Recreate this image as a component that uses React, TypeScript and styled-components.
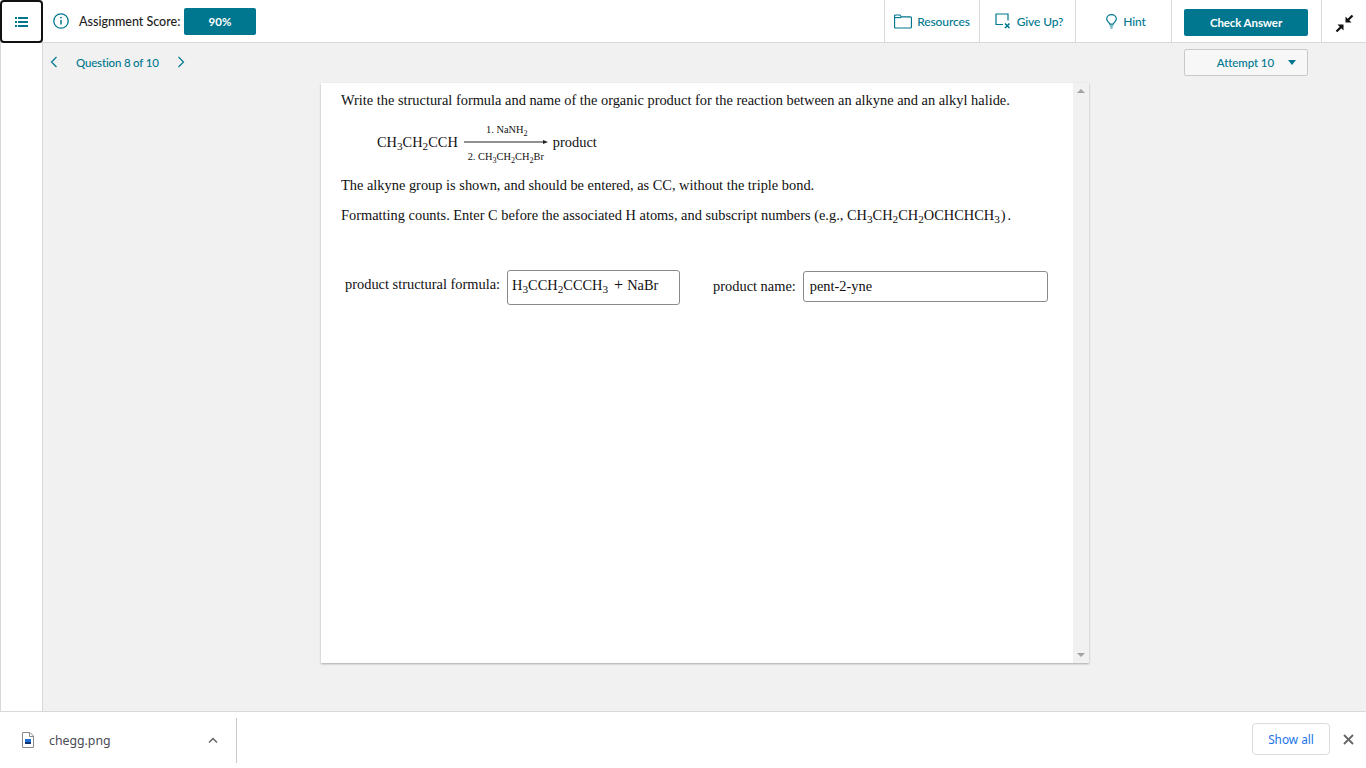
import React from "react";
import styled, { createGlobalStyle } from "styled-components";

const TEAL = "#00778f";

const GlobalStyle = createGlobalStyle`
  html, body {
    margin: 0;
    padding: 0;
    height: 100%;
    overflow: hidden;
    background: #fff;
  }
  #root { height: 100%; }
  * { box-sizing: border-box; }
`;

const Page = styled.div`
  width: 1366px;
  height: 768px;
  display: flex;
  flex-direction: column;
  font-family: Lato, "Open Sans", sans-serif;
`;

const Header = styled.header`
  height: 43px;
  flex: none;
  display: flex;
  align-items: stretch;
  border-bottom: 1px solid #d9d9d9;
  background: #fff;
`;

const MenuButton = styled.button`
  width: 43px;
  height: 43px;
  flex: none;
  background: #fff;
  border: 2px solid #111;
  border-radius: 4px;
  padding: 0;
  display: flex;
  align-items: center;
  justify-content: center;
`;

const ScoreGroup = styled.div`
  flex: 1;
  display: flex;
  align-items: center;
  padding-left: 10px;
`;

const ScoreLabel = styled.span`
  margin-left: 10px;
  font-size: 12.5px;
  font-weight: 500;
  color: #222;
  width: 105px;
  white-space: nowrap;
`;

const ScoreBadge = styled.div`
  width: 72px;
  height: 27px;
  border-radius: 2px;
  background: ${TEAL};
  color: #fff;
  font-size: 11.5px;
  font-weight: 700;
  display: flex;
  align-items: center;
  justify-content: center;
`;

const ToolItem = styled.div<{ $w: number; $gap: number; $pad: number }>`
  width: ${(p) => p.$w}px;
  flex: none;
  border-left: 1px solid #d9d9d9;
  display: flex;
  align-items: center;
  justify-content: center;
  padding-left: ${(p) => p.$pad}px;
  gap: ${(p) => p.$gap}px;
  color: ${TEAL};
  font-size: 12px;
  font-weight: 500;
  letter-spacing: -0.1px;
  white-space: nowrap;
`;

const CheckCell = styled.div`
  width: 150px;
  flex: none;
  border-left: 1px solid #d9d9d9;
  display: flex;
  align-items: center;
  padding-left: 12px;
`;

const CheckButton = styled.button`
  width: 124px;
  height: 27px;
  margin-top: 2px;
  border: 0;
  border-radius: 2px;
  background: ${TEAL};
  color: #fff;
  font-family: inherit;
  font-size: 11.5px;
  font-weight: 700;
  letter-spacing: -0.1px;
  padding: 0;
`;

const CollapseCell = styled.div`
  width: 45px;
  flex: none;
  display: flex;
  align-items: center;
  justify-content: center;
  border-left: 1px solid #d9d9d9;
  padding-top: 4px;
`;

const Body = styled.div`
  flex: 1;
  display: flex;
  min-height: 0;
`;

const Rail = styled.aside`
  width: 43px;
  flex: none;
  background: #fff;
  border-left: 1px solid #d9d9d9;
  border-right: 1px solid #d9d9d9;
`;

const Main = styled.main`
  flex: 1;
  background: #f1f1f1;
  display: flex;
  flex-direction: column;
`;

const SubBar = styled.div`
  height: 40px;
  flex: none;
  display: flex;
  align-items: center;
  padding: 0 58px 2px 7px;
`;

const NavText = styled.span`
  color: ${TEAL};
  font-size: 11.5px;
  font-weight: 500;
  letter-spacing: -0.18px;
  margin: 0 18px 0 18px;
`;

const AttemptSelect = styled.div`
  margin-left: auto;
  width: 124px;
  height: 27px;
  background: #f7f7f7;
  border: 1px solid #c9c9c9;
  border-radius: 2px;
  display: flex;
  align-items: center;
  justify-content: flex-end;
  gap: 14px;
  padding-right: 11px;
  color: ${TEAL};
  font-size: 11.5px;
  font-weight: 500;
  letter-spacing: -0.1px;
`;

const Caret = styled.span`
  width: 0;
  height: 0;
  border-left: 4px solid transparent;
  border-right: 4px solid transparent;
  border-top: 5px solid ${TEAL};
`;

const Card = styled.section`
  width: 768px;
  height: 580px;
  margin-left: 278px;
  flex: none;
  display: flex;
  background: #fff;
  box-shadow: 0 1px 2px rgba(0, 0, 0, 0.3);
`;

const Question = styled.div`
  flex: 1;
  padding: 9px 0 0 20px;
  font-family: "Liberation Serif", "Times New Roman", serif;
  font-size: 14.4px;
  line-height: 17px;
  color: #111;
`;

const Scrollbar = styled.div`
  width: 16px;
  flex: none;
  background: #f1f1f1;
  display: flex;
  flex-direction: column;
  justify-content: space-between;
  align-items: center;
  padding: 6px 0;
`;

const ScrollArrow = styled.span<{ $up?: boolean }>`
  width: 0;
  height: 0;
  border-left: 4px solid transparent;
  border-right: 4px solid transparent;
  ${(p) =>
    p.$up ? "border-bottom: 4px solid #a3a3a3;" : "border-top: 4px solid #a3a3a3;"}
`;

const Paragraph = styled.p<{ $top: number }>`
  margin: ${(p) => p.$top}px 0 0;
  white-space: nowrap;
`;

const Reaction = styled.div`
  margin: 12px 0 0 36px;
  height: 42px;
  display: flex;
  align-items: center;
  white-space: nowrap;
`;

const Arrow = styled.div`
  width: 84px;
  margin: 0 5px 0 6px;
  position: relative;
  height: 42px;
  display: flex;
  flex-direction: column;
  align-items: center;
  justify-content: space-between;
  font-size: 10.4px;
  line-height: 12px;
`;

const ArrowTop = styled.span`
  padding-top: 3px;
  padding-left: 2px;
`;

const ArrowLine = styled.svg`
  position: absolute;
  left: 0;
  top: 18px;
`;

const FormRow = styled.div`
  margin: 46px 0 0 4px;
  display: flex;
  align-items: center;
  white-space: nowrap;
`;

const FormLabel = styled.span<{ $left?: number; $shift: number }>`
  margin-left: ${(p) => p.$left ?? 0}px;
  margin-right: 7px;
  position: relative;
  top: ${(p) => p.$shift}px;
`;

const AnswerBox = styled.div<{ $w: number; $h: number; $pad: number; $shift?: number }>`
  width: ${(p) => p.$w}px;
  height: ${(p) => p.$h}px;
  position: relative;
  top: ${(p) => p.$shift ?? 0}px;
  border: 1px solid #8a8a8a;
  border-radius: 3px;
  padding: 0 6px 0 ${(p) => p.$pad}px;
  display: flex;
  align-items: center;
`;

const Formula = styled.span`
  margin-bottom: 6px;
`;

const Sub = styled.sub`
  font-size: 78%;
  line-height: 0;
  vertical-align: -3px;
`;

const Plus = styled.span`
  margin: 0 4px 0 6px;
  font-size: 16px;
`;

const CloseParen = styled.span`
  margin-left: 1px;
  letter-spacing: 2px;
`;

const DownloadBar = styled.footer`
  height: 57px;
  flex: none;
  background: #fff;
  border-top: 1px solid #d9d9d9;
  display: flex;
  align-items: center;
`;

const FileChip = styled.div`
  width: 237px;
  height: 45px;
  flex: none;
  border-right: 1px solid #c8c8c8;
  display: flex;
  align-items: center;
  padding-left: 22px;
  font-family: "Noto Sans", "Open Sans", sans-serif;
  font-size: 12.3px;
  color: #4a4a55;
`;

const FileName = styled.span`
  margin-left: 15px;
  flex: 1;
`;

const ChipCaret = styled.svg`
  margin-right: 18px;
`;

const ShowAll = styled.button`
  margin-left: auto;
  margin-top: -2px;
  width: 78px;
  height: 32px;
  background: #fff;
  border: 1px solid #dadce0;
  border-radius: 4px;
  color: #1a73e8;
  font-family: "Noto Sans", "Open Sans", sans-serif;
  font-size: 11.8px;
  padding: 0;
`;

const CloseBar = styled.svg`
  margin: -2px 12px 0 13px;
`;

const ListIcon = () => (
  <svg width="14" height="12" viewBox="0 0 14 12" fill={TEAL}>
    <rect x="0" y="1" width="2" height="2" />
    <rect x="3" y="1" width="10" height="2" />
    <rect x="0" y="5" width="2" height="2" />
    <rect x="3" y="5" width="10" height="2" />
    <rect x="0" y="9" width="2" height="2" />
    <rect x="3" y="9" width="10" height="2" />
  </svg>
);

const InfoIcon = () => (
  <svg width="16" height="16" viewBox="0 0 16 16" fill="none" stroke={TEAL}>
    <circle cx="8" cy="8" r="7.2" strokeWidth="1.3" />
    <path d="M8 7v4.6" strokeWidth="1.5" />
    <circle cx="8" cy="4.6" r="0.9" fill={TEAL} stroke="none" />
  </svg>
);

const FolderIcon = () => (
  <svg width="18" height="15" viewBox="0 0 19 15" fill="none" stroke={TEAL} strokeWidth="1.2">
    <path d="M.6 13.4V1.6q0-1 1-1h4.6l1.6 2h9.6q1 0 1 1v9.8q0 1-1 1H1.6q-1 0-1-1z" />
    <path d="M.6 3.4h7" />
  </svg>
);

const GiveUpIcon = () => (
  <svg width="16" height="16" viewBox="0 0 16 16" fill="none" stroke={TEAL}>
    <path d="M8 11.5H1V1h12v6.5" strokeWidth="1.2" />
    <path d="M10 10.5l4.5 4.5M14.5 10.5L10 15" strokeWidth="1.6" />
  </svg>
);

const BulbIcon = () => (
  <svg width="11" height="15" viewBox="0 0 11 15" fill="none" stroke={TEAL} strokeWidth="1.2">
    <path d="M3.7 10.2C3.4 8.4.7 7.6.7 5a4.8 4.4 0 0 1 9.6 0c0 2.6-2.700 3.400-3 5.200z" />
    <path d="M3.800 12h3.400M4.500 14h2" />
  </svg>
);

const CollapseIcon = () => (
  <svg width="19" height="19" viewBox="0 0 19 19" fill="#111">
    <path d="M10.500 8.500V2.500l2.200 2.200L16.700 .7 18.300 2.300l-4 4 2.200 2.200z" />
    <path d="M8.500 10.500v6l-2.200-2.200-4 4L.7 16.700l4-4-2.200-2.200z" />
  </svg>
);

const Chevron = ({ left }: { left?: boolean }) => (
  <svg width="8" height="12" viewBox="0 0 8 12" fill="none" stroke={TEAL} strokeWidth="1.200">
    <path d={left ? "M6.500 1L1.500 6l5 5" : "M1.500 1l5 5-5 5"} />
  </svg>
);

const FileIcon = () => (
  <svg width="12" height="16" viewBox="0 0 12 16">
    <path d="M.5.500h7.500l3.500 3.500v11.500H.5z" fill="#fff" stroke="#8a8a8a" />
    <path d="M7.500 1v3.500h3.500" fill="none" stroke="#8a8a8a" />
    <rect x="3" y="7" width="6" height="5" fill="#1c6fd4" />
    <rect x="3" y="10" width="6" height="2" fill="#12336e" />
  </svg>
);

const App: React.FC = () => {
  return (
    <Page>
      <GlobalStyle />
      <Header>
        <MenuButton aria-label="menu">
          <ListIcon />
        </MenuButton>
        <ScoreGroup>
          <InfoIcon />
          <ScoreLabel>Assignment Score:</ScoreLabel>
          <ScoreBadge>90%</ScoreBadge>
        </ScoreGroup>
        <ToolItem $w={95} $gap={5} $pad={0}>
          <FolderIcon />
          Resources
        </ToolItem>
        <ToolItem $w={96} $gap={6} $pad={3}>
          <GiveUpIcon />
          Give Up?
        </ToolItem>
        <ToolItem $w={96} $gap={6} $pad={5}>
          <BulbIcon />
          Hint
        </ToolItem>
        <CheckCell>
          <CheckButton>Check Answer</CheckButton>
        </CheckCell>
        <CollapseCell>
          <CollapseIcon />
        </CollapseCell>
      </Header>
      <Body>
        <Rail />
        <Main>
          <SubBar>
            <Chevron left />
            <NavText>Question 8 of 10</NavText>
            <Chevron />
            <AttemptSelect>
              Attempt 10
              <Caret />
            </AttemptSelect>
          </SubBar>
          <Card>
            <Question>
              <Paragraph $top={0}>
                Write the structural formula and name of the organic product for the reaction between an
                alkyne and an alkyl halide.
              </Paragraph>
              <Reaction>
                <span>
                  CH<Sub>3</Sub>CH<Sub>2</Sub>CCH
                </span>
                <Arrow>
                  <ArrowTop>
                    1. NaNH<Sub>2</Sub>
                  </ArrowTop>
                  <ArrowLine width="84" height="6" viewBox="0 0 84 6">
                    <path d="M0 3h80" stroke="#222" strokeWidth="1" />
                    <path d="M79 1L84 3l-5 2z" fill="#222" />
                  </ArrowLine>
                  <span>
                    2. CH<Sub>3</Sub>CH<Sub>2</Sub>CH<Sub>2</Sub>Br
                  </span>
                </Arrow>
                <span>product</span>
              </Reaction>
              <Paragraph $top={14}>
                The alkyne group is shown, and should be entered, as CC, without the triple bond.
              </Paragraph>
              <Paragraph $top={13}>
                Formatting counts. Enter C before the associated H atoms, and subscript numbers (e.g.,{" "}
                CH<Sub>3</Sub>CH<Sub>2</Sub>CH<Sub>2</Sub>OCHCHCH<Sub>3</Sub>
                <CloseParen>).</CloseParen>
              </Paragraph>
              <FormRow>
                <FormLabel $shift={-3}>product structural formula:</FormLabel>
                <AnswerBox $w={173} $h={35} $pad={4}>
                  <Formula>
                    H<Sub>3</Sub>CCH<Sub>2</Sub>CCCH<Sub>3</Sub>
                    <Plus>+</Plus>
                    NaBr
                  </Formula>
                </AnswerBox>
                <FormLabel $left={33} $shift={-1}>product name:</FormLabel>
                <AnswerBox $w={245} $h={31} $pad={6} $shift={-1}>pent-2-yne</AnswerBox>
              </FormRow>
            </Question>
            <Scrollbar>
              <ScrollArrow $up />
              <ScrollArrow />
            </Scrollbar>
          </Card>
        </Main>
      </Body>
      <DownloadBar>
        <FileChip>
          <FileIcon />
          <FileName>chegg.png</FileName>
          <ChipCaret width="10" height="6" viewBox="0 0 10 6" fill="none" stroke="#666" strokeWidth="1.500">
            <path d="M1 5.500l4-4 4 4" />
          </ChipCaret>
        </FileChip>
        <ShowAll>Show all</ShowAll>
        <CloseBar width="11" height="11" viewBox="0 0 11 11" stroke="#666" strokeWidth="1.800">
          <path d="M1 1l9 9M10 1l-9 9" />
        </CloseBar>
      </DownloadBar>
    </Page>
  );
};

export default App;
